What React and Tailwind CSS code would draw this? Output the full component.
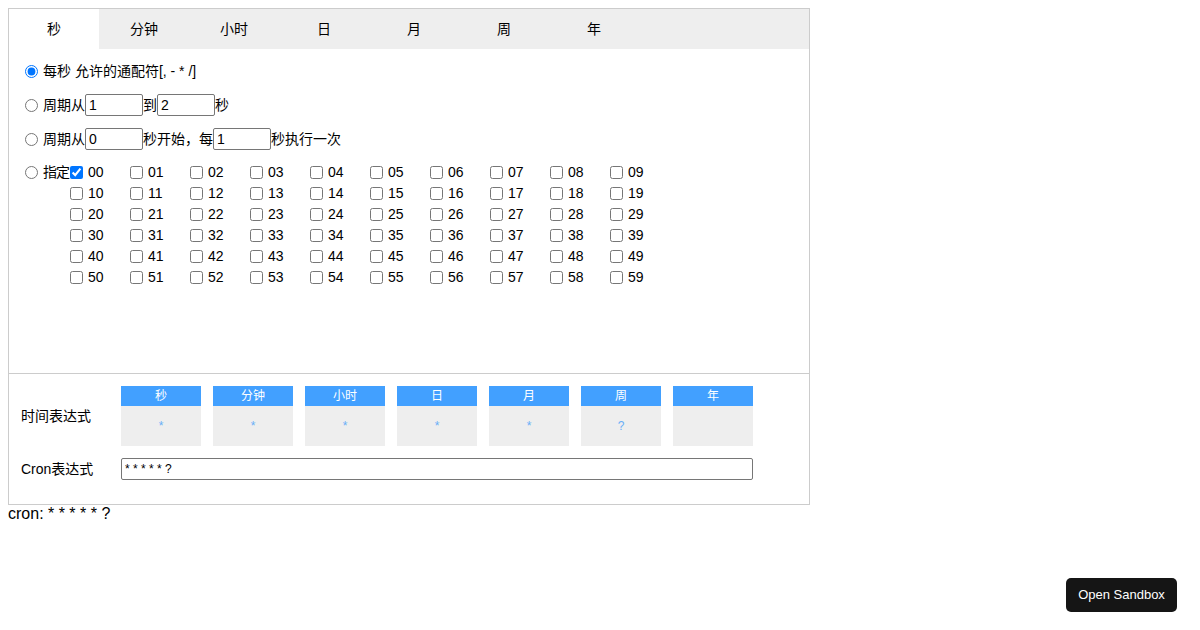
import React, { useState } from "react";

const tabs = ["秒", "分钟", "小时", "日", "月", "周", "年"];
const values = ["*", "*", "*", "*", "*", "?", ""];

const pad = (n) => (n < 10 ? "0" + n : "" + n);

const App = () => {
  const [mode, setMode] = useState(1);
  const [checked, setChecked] = useState([0]);

  const toggle = (n) =>
    setChecked((c) => (c.includes(n) ? c.filter((x) => x !== n) : [...c, n]));

  return (
    <div
      className="min-h-screen bg-white text-black p-[8px]"
      style={{ fontFamily: '"Liberation Sans", "Noto Sans CJK SC", Arial, sans-serif' }}
    >
      <div className="w-[802px] border border-[#ccc]">
        {/* tabs */}
        <div className="flex h-[40px] bg-[#eee]">
          {tabs.map((t, i) => (
            <div
              key={t}
              className={`w-[90px] flex items-center justify-center text-[14px] ${i === 0 ? "bg-white" : ""}`}
            >
              {t}
            </div>
          ))}
        </div>

        {/* tab body */}
        <div className="h-[324px] pt-[5px] pl-[16px] text-[14px]">
          <div className="h-[34px] flex items-center">
            <input type="radio" className="m-0 mr-[5px] w-[13px] h-[13px]" checked={mode === 1} onChange={() => setMode(1)} />
            <span>每秒 允许的通配符[, - * /]</span>
          </div>
          <div className="h-[34px] flex items-center">
            <input type="radio" className="m-0 mr-[5px] w-[13px] h-[13px]" checked={mode === 2} onChange={() => setMode(2)} />
            <span>周期从</span>
            <input className="w-[58px] h-[22px] border border-[#767676] rounded-[2px] px-[3px] text-[14px]" defaultValue="1" />
            <span>到</span>
            <input className="w-[58px] h-[22px] border border-[#767676] rounded-[2px] px-[3px] text-[14px]" defaultValue="2" />
            <span>秒</span>
          </div>
          <div className="h-[34px] flex items-center">
            <input type="radio" className="m-0 mr-[5px] w-[13px] h-[13px]" checked={mode === 3} onChange={() => setMode(3)} />
            <span>周期从</span>
            <input className="w-[58px] h-[22px] border border-[#767676] rounded-[2px] px-[3px] text-[14px]" defaultValue="0" />
            <span>秒开始，每</span>
            <input className="w-[58px] h-[22px] border border-[#767676] rounded-[2px] px-[3px] text-[14px]" defaultValue="1" />
            <span>秒执行一次</span>
          </div>
          <div className="flex items-start mt-[6px]">
            <div className="h-[21px] flex items-center whitespace-nowrap">
              <input type="radio" className="m-0 mr-[5px] w-[13px] h-[13px]" checked={mode === 4} onChange={() => setMode(4)} />
              <span className="tracking-[-1px]">指定</span>
            </div>
            <div className="grid grid-cols-10 w-[600px] ml-[1px]">
              {Array.from({ length: 60 }, (_, n) => (
                <label key={n} className="w-[60px] h-[21px] flex items-center">
                  <input
                    type="checkbox"
                    className="m-0 mr-[5px] w-[13px] h-[13px]"
                    checked={checked.includes(n)}
                    onChange={() => toggle(n)}
                  />
                  <span>{pad(n)}</span>
                </label>
              ))}
            </div>
          </div>
        </div>

        {/* result */}
        <div className="border-t border-[#ccc] pt-[12px] pb-[24px] pl-[12px] text-[14px]">
          <div className="flex items-center">
            <div className="w-[100px]">时间表达式</div>
            <div className="flex gap-[12px]">
              {tabs.map((t, i) => (
                <div key={t} className="w-[80px]">
                  <div className="h-[20px] bg-[#42a0ff] text-white text-[12px] flex items-center justify-center">
                    {t}
                  </div>
                  <div className="h-[40px] bg-[#eee] text-[#6aaef7] text-[12px] flex items-center justify-center">
                    {values[i]}
                  </div>
                </div>
              ))}
            </div>
          </div>
          <div className="flex items-center mt-[12px]">
            <div className="w-[100px]">Cron表达式</div>
            <input
              readOnly
              value="* * * * * ?"
              className="w-[632px] h-[22px] border border-[#767676] rounded-[2px] px-[3px] text-[12px]"
            />
          </div>
        </div>
      </div>
      <div className="text-[16px] leading-[18px]">cron: * * * * * ?</div>

      <button className="fixed right-[23px] bottom-[18px] w-[111px] h-[34px] rounded-[5px] bg-[#151515] text-white text-[13px]">
        Open Sandbox
      </button>
    </div>
  );
};

export default App;
